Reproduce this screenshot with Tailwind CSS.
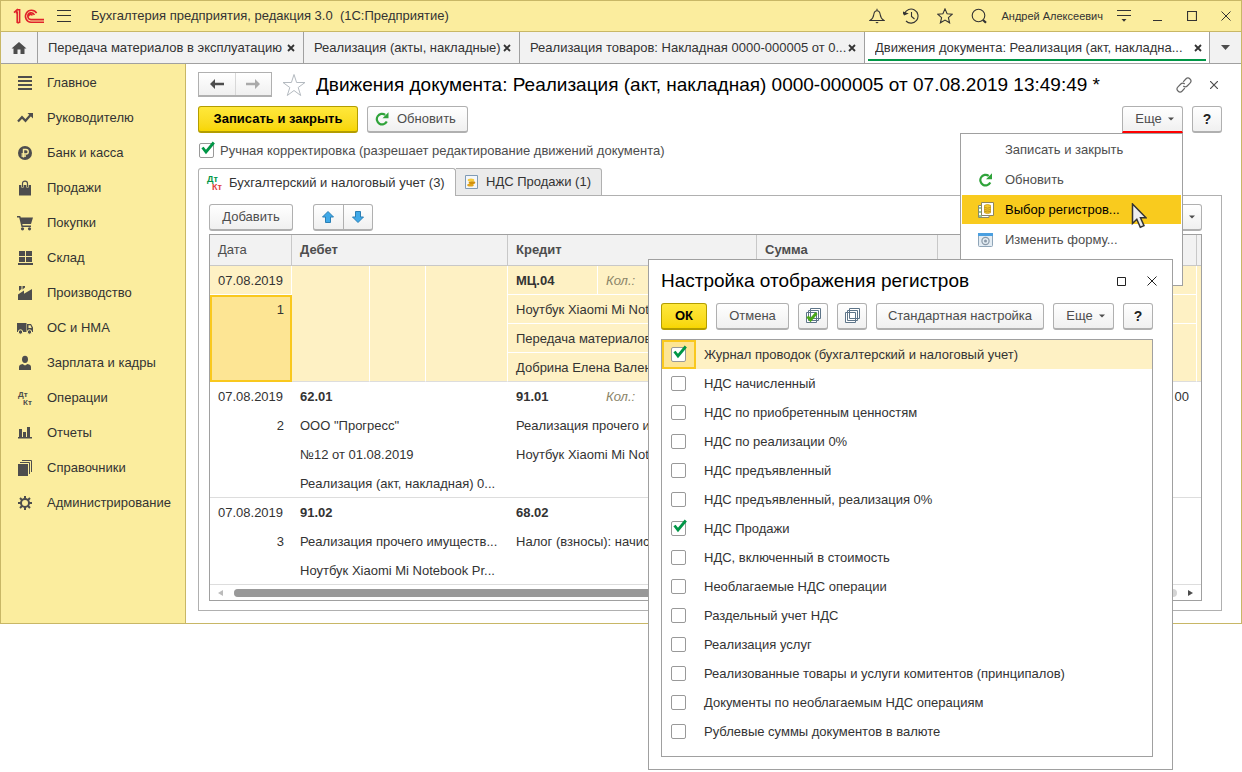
<!DOCTYPE html>
<html lang="ru">
<head>
    <meta charset="UTF-8">
    <meta name="viewport" content="width=device-width, initial-scale=1.0">
    <title>Бухгалтерия предприятия, редакция 3.0</title>
    <script src="https://cdn.jsdelivr.net/npm/@tailwindcss/browser@4"></script>
</head>
<body class="min-h-screen bg-white font-['Liberation_Sans',Arial,sans-serif] text-[13px] leading-4 text-[#333]">
    <!-- Shared icons -->
    <svg class="hidden">
        <symbol id="i-refresh" viewBox="0 0 14 14"><path d="M11.8 9.6A5.3 5.3 0 1 1 10.2 2.800" fill="none" stroke="#2fa33a" stroke-width="2.200"/><path d="M13.500 .3V6.300H7.500z" fill="#2fa33a"/></symbol>
        <symbol id="i-check" viewBox="0 0 16 14"><path d="M2.5 6.5 6 11 13.8 1.5" fill="none" stroke="#009646" stroke-width="2.8"/></symbol>
        <symbol id="i-x" viewBox="0 0 10 10"><path d="M.5.5l9 9M9.5.5l-9 9" fill="none" stroke="currentColor"/></symbol>
        <symbol id="i-xb" viewBox="0 0 8 8"><path d="M1 1l6 6M7 1 1 7" fill="none" stroke="currentColor" stroke-width="1.8"/></symbol>
        <symbol id="i-down" viewBox="0 0 6 4"><path d="M0 .5h6l-3 3z" fill="currentColor"/></symbol>
    </svg>

    <div class="relative">
        <div class="border border-[#c8b766]">
            <header class="flex h-[31px] items-center border-b border-[#c8b766] bg-[#fbed9e]">
                <svg class="ml-3 h-4 w-8 shrink-0" viewBox="0 0 32 16" fill="none" stroke="#e0232b" stroke-width="1.6"><path d="M1 4.6 3.8 2v3M2.8 4.6h1.4V15M3.6 1.700h3V15M4.200 14.600h2"/><path d="M23.600 5.200A6 6 0 1 0 18 14.300h13M21.400 7A3.400 3.400 0 1 0 18 11.600h13M15.500 8.400a2.200 2.200 0 0 1 4-1"/></svg>
                <button class="ml-[7px] flex h-6 w-6 items-center justify-center" aria-label="Меню"><svg class="h-3 w-3.5" viewBox="0 0 14 12" stroke="#333"><path d="M0 .5h14M0 5.5h14M0 11.5h14"/></svg></button>
                <h1 class="ml-[11px] flex-1 truncate pl-1 whitespace-pre">Бухгалтерия предприятия, редакция 3.0  (1С:Предприятие)</h1>
                <button class="flex w-[34px] justify-center" aria-label="Уведомления"><svg class="h-4 w-4" viewBox="0 0 16 16" fill="none" stroke="#333" stroke-width="1.1"><path d="M1 12.500h14C12.300 10.800 11.500 9 11.200 6.500 10.800 4 10 2.800 8 2.800S5.200 4 4.800 6.500C4.500 9 3.700 10.800 1 12.500zM8 2.800V.8"/><path d="M6.300 14h3.400L8 15.500z" fill="#333" stroke="none"/></svg></button>
                <button class="flex w-[34px] justify-center" aria-label="История"><svg class="h-4 w-4" viewBox="0 0 16 16" fill="none" stroke="#333" stroke-width="1.1"><path d="M1.500 5.500A7 7 0 1 1 3 13M8.500 4v4.500l3 2.500"/><path d="M0 4.200l1.300 2.600 2.900-1.300z" fill="#333"/></svg></button>
                <button class="flex w-[34px] justify-center" aria-label="Избранное"><svg class="h-4 w-4" viewBox="0 0 16 16" fill="none" stroke="#333" stroke-width="1.1"><path d="M8 .9l2.100 4.800 5.200.5-3.900 3.400 1.200 5.200L8 12.100l-4.600 2.700 1.200-5.200L.7 6.200l5.200-.5z"/></svg></button>
                <button class="flex w-[34px] justify-center" aria-label="Поиск"><svg class="h-4 w-4" viewBox="0 0 16 16" fill="none" stroke="#333" stroke-width="1.100"><circle cx="7.500" cy="7.500" r="6.300"/><path d="M12 12l3 2.800" stroke-width="2.200"/></svg></button>
                <span class="pr-1 pl-[5px] text-[11px]">Андрей Алексеевич</span>
                <button class="flex w-[34px] justify-center" aria-label="Настройки"><svg class="h-3.5 w-3.5" viewBox="0 0 14 14" stroke="#333"><path d="M0 1.500h14M0 6.500h14"/><path d="M4.500 10h5L7 12.800z" fill="#333" stroke="none"/></svg></button>
                <button class="flex w-[34px] justify-center" aria-label="Свернуть"><svg class="h-2.5 w-2.5" viewBox="0 0 10 10" stroke="#333"><path d="M0 9.500h9"/></svg></button>
                <button class="flex w-[34px] justify-center" aria-label="Развернуть"><svg class="h-2.5 w-2.5" viewBox="0 0 10 10" fill="none" stroke="#333"><path d="M.5.5h9v9h-9z" stroke-width="1.200"/></svg></button>
                <button class="flex w-8 justify-center pl-0.5" aria-label="Закрыть"><svg class="h-2.5 w-2.5"><use href="#i-x"/></svg></button>
            </header>

            <div class="flex h-8 border-b border-[#a0a0a0] bg-[#f2f2f2]">
                <button class="flex w-[37px] shrink-0 items-center justify-center border-r border-[#a0a0a0]" aria-label="Начальная страница"><svg class="h-3.5 w-4" viewBox="0 0 16 14" fill="#4d4d4d"><path d="M8 1 .5 7.500h2V13h4V8.500h3V13h4V7.500h2z"/></svg></button>
                <div class="flex w-[266px] items-center border-r border-[#a0a0a0] pl-2.5 pr-2"><a href="#" class="flex-1 truncate">Передача материалов в эксплуатацию</a><button aria-label="Закрыть вкладку"><svg class="h-2 w-2"><use href="#i-xb"/></svg></button></div>
                <div class="flex w-[216px] items-center border-r border-[#a0a0a0] pl-2.5 pr-2"><a href="#" class="flex-1 truncate">Реализация (акты, накладные)</a><button aria-label="Закрыть вкладку"><svg class="h-2 w-2"><use href="#i-xb"/></svg></button></div>
                <div class="flex w-[345px] items-center border-r border-[#a0a0a0] pl-2.5 pr-2"><a href="#" class="flex-1 truncate">Реализация товаров: Накладная 0000-000005 от 0...</a><button aria-label="Закрыть вкладку"><svg class="h-2 w-2"><use href="#i-xb"/></svg></button></div>
                <div class="flex flex-1 border-r border-[#a0a0a0] bg-white px-[3px] pb-0.5"><div class="flex flex-1 items-center border-b-2 border-[#009646] pt-1 pr-1 pl-[7px]"><a href="#" class="flex-1 truncate">Движения документа: Реализация (акт, накладна...</a><button aria-label="Закрыть вкладку"><svg class="h-2 w-2"><use href="#i-xb"/></svg></button></div></div>
                <button class="flex w-[31px] shrink-0 items-center justify-center text-[#4d4d4d]" aria-label="Список вкладок"><svg class="h-[5px] w-[9px]" viewBox="0 0 9 5"><path d="M0 0h9L4.500 5z" fill="currentColor"/></svg></button>
            </div>

            <div class="flex">
                <nav class="w-[185px] shrink-0 border-r border-[#c8b766] bg-[#fbed9e] pt-px">
                    <a href="#" class="flex h-[35px] items-center gap-3.5 pl-4"><svg class="h-4 w-4" viewBox="0 0 16 16" fill="#4d4d4d"><path d="M1 1h14v2H1zM1 5h14v2H1zM1 9h14v2H1zM1 13h14v2H1z"/></svg>Главное</a>
                    <a href="#" class="flex h-[35px] items-center gap-3.5 pl-4"><svg class="h-4 w-4" viewBox="0 0 16 16"><path d="M1 11.500 5 7.200l3.500 3.600L13.500 5" fill="none" stroke="#4d4d4d" stroke-width="2.200"/><path d="M10.500 3H16v5.500z" fill="#4d4d4d"/></svg>Руководителю</a>
                    <a href="#" class="flex h-[35px] items-center gap-3.5 pl-4"><svg class="h-4 w-4" viewBox="0 0 16 16"><circle cx="8" cy="8" r="7" fill="#4d4d4d"/><path d="M6.500 12.500v-8H9a2.200 2.200 0 0 1 0 4.500H4.500M4.500 11H9" fill="none" stroke="#fbed9e" stroke-width="1.400"/></svg>Банк и касса</a>
                    <a href="#" class="flex h-[35px] items-center gap-3.5 pl-4"><svg class="h-4 w-4" viewBox="0 0 16 16"><path d="M2 5h12v10.500H2z" fill="#4d4d4d"/><path d="M5.500 7.500V3.500Q5.500 1 8 1t2.500 2.500v4" fill="none" stroke="#fbed9e" stroke-width="2.400"/><path d="M5.500 7V3.500Q5.500 1.200 8 1.200t2.500 2.300V7" fill="none" stroke="#4d4d4d" stroke-width="1.200"/></svg>Продажи</a>
                    <a href="#" class="flex h-[35px] items-center gap-3.5 pl-4"><svg class="h-4 w-4" viewBox="0 0 16 16" fill="#4d4d4d"><path d="M0 1h3.200l.6 1.500H16L14 9H5.300l.4 1.500H14V12H4.500L2.200 2.500H0z"/><circle cx="5.500" cy="13.800" r="1.600"/><circle cx="12.500" cy="13.800" r="1.600"/></svg>Покупки</a>
                    <a href="#" class="flex h-[35px] items-center gap-3.5 pl-4"><svg class="h-4 w-4" viewBox="0 0 16 16" fill="#4d4d4d"><path d="M2 1h6v5H2zM9 1h6v5H9zM2 7h6v5H2zM9 7h6v5H9zM1 13h15v2H1z"/></svg>Склад</a>
                    <a href="#" class="flex h-[35px] items-center gap-3.5 pl-4"><svg class="h-4 w-4" viewBox="0 0 16 16" fill="#4d4d4d"><path d="M1 15V9.500L7 5.500v3.300L15 4v11zM2 1h2.500v3L2 6zM5.500 1H8v1.500l-2.500 2z"/></svg>Производство</a>
                    <a href="#" class="flex h-[35px] items-center gap-3.5 pl-4"><svg class="h-4 w-4" viewBox="0 0 16 16" fill="#4d4d4d"><path d="M0 3h9.500v9H0zM10 4h4l2 3.500V12h-6z"/><path d="M11.500 5.300h2L14.700 8h-3.200z" fill="#fbed9e"/><circle cx="3.500" cy="12" r="2.200" stroke="#fbed9e" stroke-width="1"/><circle cx="12.500" cy="12" r="2.200" stroke="#fbed9e" stroke-width="1"/></svg>ОС и НМА</a>
                    <a href="#" class="flex h-[35px] items-center gap-3.5 pl-4"><svg class="h-4 w-4" viewBox="0 0 16 16" fill="#4d4d4d"><ellipse cx="8" cy="4.300" rx="3" ry="3.600"/><path d="M2 15v-3q0-2.500 3.500-3L8 10.500 10.500 9q3.500.5 3.500 3v3z"/></svg>Зарплата и кадры</a>
                    <a href="#" class="flex h-[35px] items-center gap-3.5 pl-4"><svg class="h-4 w-4 overflow-visible" viewBox="0 0 16 16" fill="#4d4d4d" font-size="8" font-weight="bold"><text x="1" y="7">Дт</text><text x="6" y="15">Кт</text></svg>Операции</a>
                    <a href="#" class="flex h-[35px] items-center gap-3.5 pl-4"><svg class="h-4 w-4" viewBox="0 0 16 16" fill="#4d4d4d"><path d="M2 4h3v8H2zM6 7h3v5H6zM10 2h3v10h-3zM1 12h14v1.500H1z"/></svg>Отчеты</a>
                    <a href="#" class="flex h-[35px] items-center gap-3.5 pl-4"><svg class="h-4 w-4" viewBox="0 0 16 16" fill="#4d4d4d"><path d="M1 4h10v12H1z"/><path d="M3 2.500h9.500V14M5 .5h9.500V12" fill="none" stroke="#4d4d4d"/></svg>Справочники</a>
                    <a href="#" class="flex h-[35px] items-center gap-3.5 pl-4"><svg class="h-4 w-4" viewBox="0 0 16 16" fill="none" stroke="#4d4d4d"><circle cx="8" cy="8" r="4" stroke-width="2"/><path d="M8 1v3M8 12v3M1 8h3M12 8h3M3 3l2.200 2.200M10.800 10.800 13 13M13 3l-2.200 2.200M5.200 10.800 3 13" stroke-width="2"/></svg>Администрирование</a>
                </nav>

                <main class="min-w-0 flex-1 pt-2 pr-[19px] pb-3 pl-3">
                    <div class="flex h-[25px] items-center">
                        <div class="flex h-[25px] w-[74px] shrink-0 border border-b-2 border-[#b0b0b0] bg-linear-to-b from-white to-[#f0f0f0]">
                            <button class="flex flex-1 items-center justify-center border-r border-[#d8d8d8]" aria-label="Назад"><svg class="h-3 w-3.5" viewBox="0 0 14 12"><path d="M0 6l5-5v3.700h9v2.600H5V11z" fill="#4d4d4d"/></svg></button>
                            <button class="flex flex-1 items-center justify-center" aria-label="Вперед"><svg class="h-3 w-3.5" viewBox="0 0 14 12"><path d="M14 6 9 1v3.700H0v2.600h9V11z" fill="#aaa"/></svg></button>
                        </div>
                        <button class="ml-2.5 shrink-0" aria-label="В избранное"><svg class="h-6 w-6" viewBox="0 0 24 24" fill="none" stroke="#b4bac0"><path d="M12 1.500l2.600 8h8.400l-6.800 5 2.500 8L12 17.500l-6.700 5 2.500-8L1 9.500h8.400z"/></svg></button>
                        <h2 class="ml-2.5 flex-1 truncate text-[19px] leading-6 text-black">Движения документа: Реализация (акт, накладная) 0000-000005 от 07.08.2019 13:49:49 *</h2>
                        <button aria-label="Получить ссылку"><svg class="h-4 w-4" viewBox="0 0 16 16" fill="none" stroke="#666" stroke-width="1.200"><path d="M7.200 4.800 9.800 2a2.900 2.900 0 0 1 4.200 4.200L11.200 9A2.700 2.700 0 0 1 7.300 9M8.800 11.200 6.200 14A2.900 2.900 0 0 1 2 9.800L4.800 7A2.700 2.700 0 0 1 8.700 7"/></svg></button>
                        <button class="mx-[18px] mr-1 text-[#4d4d4d]" aria-label="Закрыть форму"><svg class="h-2 w-2" viewBox="0 0 8 8"><path d="M0 0l8 8M8 0 0 8" stroke="currentColor" stroke-width="1.200"/></svg></button>
                    </div>

                    <div class="mt-[9px] flex items-center">
                        <button class="h-[27px] w-40 rounded-[3px] border border-b-2 border-[#b39d00] bg-linear-to-b from-[#ffe83a] to-[#f7d600] font-bold text-black">Записать и закрыть</button>
                        <button class="ml-[9px] flex h-[27px] w-[101px] items-center gap-2 rounded-[3px] border border-b-2 border-[#b0b0b0] bg-linear-to-b from-white to-[#f0f0f0] pl-[7px] text-[#4d4d4d]"><svg class="h-3.5 w-3.5"><use href="#i-refresh"/></svg>Обновить</button>
                        <div class="relative ml-auto">
                            <button class="flex h-[27px] w-[61px] items-center justify-center gap-1.5 rounded-t-[3px] border border-b-2 border-[#b0b0b0] border-b-[red] bg-linear-to-b from-white to-[#f0f0f0] pl-1 text-[#4d4d4d]">Еще<svg class="h-1 w-1.5"><use href="#i-down"/></svg></button>
                            <!-- Actions menu -->
                            <div class="absolute top-full right-0 z-10 w-[223px] border border-[#a0a0a0] bg-white px-px pt-px pb-[30px] text-[#4d4d4d]">
                                <button class="flex h-[30px] w-full items-center pl-[43px]">Записать и закрыть</button>
                                <button class="flex h-[30px] w-full items-center gap-3 pl-4"><svg class="h-3.5 w-[15px]"><use href="#i-refresh"/></svg>Обновить</button>
                                <button class="relative mb-px flex h-[29px] w-full items-center gap-2.5 bg-[#f9cb1e] pl-4 text-black"><svg class="h-4 w-[17px]" viewBox="0 0 17 16"><path d="M.5 3.500H11v12H.5z" fill="#fff" stroke="#8a8a6a"/><path d="M1 5h3v2H1zM1 9h3v2H1zM1 13h3v2H1z" fill="#8fc9a0"/><path d="M3.500.5h12v13h-12z" fill="#fff" stroke="#8c8560"/><path d="M6.500 3.300q3-1.600 6 0v7.500q-3 1.600-6 0z" fill="#f4c82c" stroke="#c79a15" stroke-width=".8"/><path d="M6.500 5.500q3 1.300 6 0M6.500 7.500q3 1.300 6 0M6.500 9.300q3 1.300 6 0" fill="none" stroke="#b88a10" stroke-width=".8"/></svg>Выбор регистров...
                                    <svg class="absolute top-2 left-[169px] h-[27px] w-4" viewBox="0 0 16 27"><path d="M1.500 1v19.500l4.300-4.200 3.500 8 3.700-1.700-3.500-7.800h5.500z" fill="#eee" stroke="#333" stroke-width="1.500"/></svg>
                                </button>
                                <button class="flex h-[30px] w-full items-center gap-3 pl-4"><svg class="h-3.5 w-[15px]" viewBox="0 0 15 14"><rect x=".5" y=".5" width="14" height="13" rx="1" fill="#e3ecf3" stroke="#8fa5b8"/><path d="M0 0h15v3H0z" fill="#4a9fe0"/><circle cx="7.500" cy="8" r="3.600" fill="none" stroke="#8a99a8" stroke-width="1.200"/><circle cx="7.500" cy="8" r="1.500" fill="#8a99a8"/></svg>Изменить форму...</button>
                            </div>
                        </div>
                        <button class="ml-[9px] h-[27px] w-[30px] rounded-[3px] border border-b-2 border-[#b0b0b0] bg-linear-to-b from-white to-[#f0f0f0] text-[14px] font-bold text-[#222]">?</button>
                    </div>

                    <label class="flex h-[35px] items-center gap-1.5 pl-px text-[#4d4d4d]">
                        <span class="relative flex"><input type="checkbox" checked class="peer h-[15px] w-[15px] appearance-none rounded-[2px] border border-[#999] bg-white"><svg class="pointer-events-none absolute -top-0.5 left-px hidden h-3.5 w-4 peer-checked:block"><use href="#i-check"/></svg></span>
                        Ручная корректировка (разрешает редактирование движений документа)
                    </label>

                    <div class="relative z-1 -mb-px flex h-7">
                        <button class="flex w-[258px] items-center gap-1.5 rounded-t-[3px] border border-b-0 border-[#b0b0b0] bg-white pl-2"><svg class="h-4 w-4 overflow-visible" viewBox="0 0 16 16" font-size="9" font-weight="bold"><text x="0" y="7" fill="#009646">Дт</text><text x="5" y="15" fill="#e0413f">Кт</text></svg>Бухгалтерский и налоговый учет (3)</button>
                        <button class="flex w-[146px] items-center gap-2 rounded-tr-[3px] border border-l-0 border-[#b0b0b0] bg-[#ebebeb] pl-[9px]"><svg class="h-3.5 w-[13px]" viewBox="0 0 13 14"><path d="M.5.5h12v13H.5z" fill="#f3f6fa" stroke="#7f9bb5"/><ellipse cx="5.500" cy="10" rx="3.300" ry="1.600" fill="#e0a41c"/><ellipse cx="7" cy="7.500" rx="3.300" ry="1.600" fill="#d0900f"/><ellipse cx="6" cy="5" rx="3.300" ry="1.600" fill="#f6ca3c"/></svg>НДС Продажи (1)</button>
                    </div>

                    <section class="border border-[#b0b0b0] pt-2 pr-[19px] pb-[9px] pl-2.5">
                        <div class="mb-[3px] flex">
                            <button class="h-[27px] w-[84px] rounded-[3px] border border-b-2 border-[#b0b0b0] bg-linear-to-b from-white to-[#f0f0f0] text-[#4d4d4d]">Добавить</button>
                            <div class="ml-5 flex h-[27px] w-[60px] rounded-[3px] border border-b-2 border-[#b0b0b0] bg-linear-to-b from-white to-[#f0f0f0]">
                                <button class="flex flex-1 items-center justify-center border-r border-[#b0b0b0]" aria-label="Вверх"><svg class="h-3 w-3" viewBox="0 0 12 12"><path d="M6 .5 11.500 6H8.500v5.500h-5V6H.5z" fill="#3fa9e8" stroke="#2a7fb5"/></svg></button>
                                <button class="flex flex-1 items-center justify-center" aria-label="Вниз"><svg class="h-3 w-3" viewBox="0 0 12 12"><path d="M6 11.500.5 6h3V.5h5V6h3z" fill="#3fa9e8" stroke="#2a7fb5"/></svg></button>
                            </div>
                            <button class="ml-auto flex h-[27px] w-[61px] items-center justify-end rounded-[3px] border border-b-2 border-[#b0b0b0] bg-linear-to-b from-white to-[#f0f0f0] pr-1.5 text-[#4d4d4d]" aria-label="Еще"><svg class="h-1 w-1.5"><use href="#i-down"/></svg></button>
                        </div>

                        <div class="border border-[#a0a0a0]">
                            <table class="w-full table-fixed border-separate border-spacing-0 whitespace-nowrap">
                                <colgroup><col class="w-[82px]"><col class="w-[78px]"><col class="w-[56px]"><col class="w-[82px]"><col class="w-[90px]"><col class="w-[159px]"><col class="w-[181px]"><col><col class="w-1"></colgroup>
                                <thead class="bg-[#f2f2f2] text-left text-[#4d4d4d]">
                                    <tr class="h-[31px]">
                                        <th class="border-r border-b border-[#c8c8c8] pl-2 font-normal">Дата</th>
                                        <th colspan="3" class="border-r border-b border-[#c8c8c8] pl-2">Дебет</th>
                                        <th colspan="2" class="border-r border-b border-[#c8c8c8] pl-2">Кредит</th>
                                        <th class="border-r border-b border-[#c8c8c8] pl-2">Сумма</th>
                                        <th class="border-r border-b border-[#c8c8c8]"></th>
                                        <th class="border-b border-[#c8c8c8]"></th>
                                    </tr>
                                </thead>
                                <tbody class="bg-[#fef1c4]">
                                    <tr class="h-[29px]">
                                        <td class="border-r border-b border-white pt-px pl-2">07.08.2019</td>
                                        <td rowspan="4" class="border-r border-b border-white border-b-[#ddd]"></td>
                                        <td rowspan="4" class="border-r border-b border-white border-b-[#ddd]"></td>
                                        <td rowspan="4" class="border-r border-b border-white border-b-[#ddd]"></td>
                                        <td class="border-r border-b border-white pt-px pl-2 font-bold">МЦ.04</td>
                                        <td class="border-r border-b border-white pt-px pl-2 text-[#8a8468] italic">Кол.:</td>
                                        <td class="border-r border-b border-white"></td>
                                        <td class="border-r border-b border-white"></td>
                                        <td rowspan="4" class="border-b border-[#ddd]"></td>
                                    </tr>
                                    <tr class="h-[29px]">
                                        <td rowspan="3" class="border-2 border-[#f9c81e] bg-[#fde594] pt-[5px] pr-1.5 text-right align-top">1</td>
                                        <td colspan="2" class="border-r border-b border-white pt-px pl-2">Ноутбук Xiaomi Mi Not</td>
                                        <td class="border-r border-b border-white"></td>
                                        <td class="border-r border-b border-white"></td>
                                    </tr>
                                    <tr class="h-[29px]">
                                        <td colspan="2" class="border-r border-b border-white pt-px pl-2">Передача материалов</td>
                                        <td rowspan="2" class="border-r border-b border-white border-b-[#ddd]"></td>
                                        <td rowspan="2" class="border-r border-b border-white border-b-[#ddd]"></td>
                                    </tr>
                                    <tr class="h-[29px]">
                                        <td colspan="2" class="border-r border-b border-white border-b-[#ddd] pt-px pl-2">Добрина Елена Вален</td>
                                    </tr>
                                </tbody>
                                <tbody>
                                    <tr class="h-[29px]">
                                        <td class="pl-2">07.08.2019</td>
                                        <td colspan="3" class="pl-2 font-bold">62.01</td>
                                        <td class="pl-2 font-bold">91.01</td>
                                        <td class="pl-2 text-[#8a8468] italic">Кол.:</td>
                                        <td></td>
                                        <td class="pr-2 text-right">00</td>
                                        <td></td>
                                    </tr>
                                    <tr class="h-[29px]">
                                        <td class="pr-2 text-right">2</td>
                                        <td colspan="3" class="pl-2">ООО "Прогресс"</td>
                                        <td colspan="2" class="pl-2">Реализация прочего и</td>
                                        <td colspan="3"></td>
                                    </tr>
                                    <tr class="h-[29px]">
                                        <td></td>
                                        <td colspan="3" class="pl-2">№12 от 01.08.2019</td>
                                        <td colspan="2" class="pl-2">Ноутбук Xiaomi Mi Not</td>
                                        <td colspan="3"></td>
                                    </tr>
                                    <tr class="h-[29px]">
                                        <td class="border-b border-[#ddd]"></td>
                                        <td colspan="3" class="border-b border-[#ddd] pt-px pl-2">Реализация (акт, накладная) 0...</td>
                                        <td colspan="5" class="border-b border-[#ddd]"></td>
                                    </tr>
                                </tbody>
                                <tbody>
                                    <tr class="h-[29px]">
                                        <td class="pl-2">07.08.2019</td>
                                        <td colspan="3" class="pl-2 font-bold">91.02</td>
                                        <td colspan="2" class="pl-2 font-bold">68.02</td>
                                        <td colspan="3"></td>
                                    </tr>
                                    <tr class="h-[29px]">
                                        <td class="pr-2 text-right">3</td>
                                        <td colspan="3" class="pl-2">Реализация прочего имуществ...</td>
                                        <td colspan="2" class="pl-2">Налог (взносы): начис</td>
                                        <td colspan="3"></td>
                                    </tr>
                                    <tr class="h-[29px]">
                                        <td class="border-b border-[#ddd]"></td>
                                        <td colspan="3" class="border-b border-[#ddd] pt-px pl-2">Ноутбук Xiaomi Mi Notebook Pr...</td>
                                        <td colspan="5" class="border-b border-[#ddd]"></td>
                                    </tr>
                                </tbody>
                            </table>
                            <div class="flex h-[15px] items-center gap-[11px] px-2">
                                <svg class="h-1.5 w-[5px]" viewBox="0 0 5 6"><path d="M5 0v6L0 3z" fill="#bbb"/></svg>
                                <div class="h-2 flex-1 rounded-full bg-[#d4d4d4]"><div class="h-2 w-4/5 rounded-full bg-[#999]"></div></div>
                                <svg class="h-1.5 w-[5px]" viewBox="0 0 5 6"><path d="M0 0v6l5-3z" fill="#4d4d4d"/></svg>
                            </div>
                        </div>
                    </section>
                </main>
            </div>
        </div>

        <!-- Register display settings -->
        <div role="dialog" aria-labelledby="dialog-title" class="absolute top-[259px] right-[69px] z-20 w-[525px] border border-[#a0a0a0] bg-white pt-[9px] pr-[19px] pb-3 pl-3">
            <div class="flex h-6 items-center">
                <h2 id="dialog-title" class="flex-1 text-[19px] leading-6 text-black">Настройка отображения регистров</h2>
                <button class="mr-[21px]" aria-label="Развернуть"><svg class="h-[9px] w-[9px]" viewBox="0 0 9 9" fill="none" stroke="#222"><path d="M.5.5h8v8h-8z"/></svg></button>
                <button class="-mr-1" aria-label="Закрыть"><svg class="h-2.5 w-2.5 text-[#222]"><use href="#i-x"/></svg></button>
            </div>
            <div class="mt-2.5 flex gap-[9px] text-[#4d4d4d]">
                <button class="h-[27px] w-[46px] rounded-[3px] border border-b-2 border-[#b39d00] bg-linear-to-b from-[#ffe83a] to-[#f7d600] font-bold text-black">ОК</button>
                <button class="h-[27px] w-[73px] rounded-[3px] border border-b-2 border-[#b0b0b0] bg-linear-to-b from-white to-[#f0f0f0]">Отмена</button>
                <button class="flex h-[27px] w-[30px] items-center justify-center rounded-[3px] border border-b-2 border-[#b0b0b0] bg-linear-to-b from-white to-[#f0f0f0]" aria-label="Установить флажки"><svg class="h-4 w-4" viewBox="0 0 16 16" fill="#fff" stroke="#5d7488"><path d="M5.500.5h10v10h-10zM3.500 2.500h10v10h-10zM1.500 4.500h10v10h-10z"/><path d="M2.500 8.500l3 3.500 6-7" fill="none" stroke="#4aa818" stroke-width="2.800"/></svg></button>
                <button class="flex h-[27px] w-[30px] items-center justify-center rounded-[3px] border border-b-2 border-[#b0b0b0] bg-linear-to-b from-white to-[#f0f0f0]" aria-label="Снять флажки"><svg class="h-4 w-4" viewBox="0 0 16 16" fill="#fff" stroke="#5d7488"><path d="M5.500.5h10v10h-10zM3.500 2.500h10v10h-10zM1.500 4.500h10v10h-10z"/></svg></button>
                <button class="h-[27px] flex-1 rounded-[3px] border border-b-2 border-[#b0b0b0] bg-linear-to-b from-white to-[#f0f0f0] whitespace-nowrap">Стандартная настройка</button>
                <button class="flex h-[27px] w-[61px] items-center justify-center gap-1.5 rounded-[3px] border border-b-2 border-[#b0b0b0] bg-linear-to-b from-white to-[#f0f0f0] pl-1">Еще<svg class="h-1 w-1.5"><use href="#i-down"/></svg></button>
                <button class="h-[27px] w-[30px] rounded-[3px] border border-b-2 border-[#b0b0b0] bg-linear-to-b from-white to-[#f0f0f0] text-[14px] font-bold text-[#222]">?</button>
            </div>
            <div class="mt-[9px] border border-[#a0a0a0] pb-2.5">
                <label class="flex h-[29px] items-center gap-2 bg-[#fef1c4]"><span class="flex h-[29px] w-[34px] items-center border-2 border-[#f9c81e] bg-[#fde594] pl-[7px]"><span class="relative flex"><input type="checkbox" checked class="peer h-[15px] w-[15px] appearance-none rounded-[2px] border border-[#999] bg-white"><svg class="pointer-events-none absolute -top-0.5 left-px hidden h-3.5 w-4 peer-checked:block"><use href="#i-check"/></svg></span></span>Журнал проводок (бухгалтерский и налоговый учет)</label>
                <label class="flex h-[29px] items-center gap-[18px] pl-[9px]"><input type="checkbox" class="h-[15px] w-[15px] appearance-none rounded-[2px] border border-[#999] bg-white">НДС начисленный</label>
                <label class="flex h-[29px] items-center gap-[18px] pl-[9px]"><input type="checkbox" class="h-[15px] w-[15px] appearance-none rounded-[2px] border border-[#999] bg-white">НДС по приобретенным ценностям</label>
                <label class="flex h-[29px] items-center gap-[18px] pl-[9px]"><input type="checkbox" class="h-[15px] w-[15px] appearance-none rounded-[2px] border border-[#999] bg-white">НДС по реализации 0%</label>
                <label class="flex h-[29px] items-center gap-[18px] pl-[9px]"><input type="checkbox" class="h-[15px] w-[15px] appearance-none rounded-[2px] border border-[#999] bg-white">НДС предъявленный</label>
                <label class="flex h-[29px] items-center gap-[18px] pl-[9px]"><input type="checkbox" class="h-[15px] w-[15px] appearance-none rounded-[2px] border border-[#999] bg-white">НДС предъявленный, реализация 0%</label>
                <label class="flex h-[29px] items-center gap-[18px] pl-[9px]"><span class="relative flex"><input type="checkbox" checked class="peer h-[15px] w-[15px] appearance-none rounded-[2px] border border-[#999] bg-white"><svg class="pointer-events-none absolute -top-0.5 left-px hidden h-3.5 w-4 peer-checked:block"><use href="#i-check"/></svg></span>НДС Продажи</label>
                <label class="flex h-[29px] items-center gap-[18px] pl-[9px]"><input type="checkbox" class="h-[15px] w-[15px] appearance-none rounded-[2px] border border-[#999] bg-white">НДС, включенный в стоимость</label>
                <label class="flex h-[29px] items-center gap-[18px] pl-[9px]"><input type="checkbox" class="h-[15px] w-[15px] appearance-none rounded-[2px] border border-[#999] bg-white">Необлагаемые НДС операции</label>
                <label class="flex h-[29px] items-center gap-[18px] pl-[9px]"><input type="checkbox" class="h-[15px] w-[15px] appearance-none rounded-[2px] border border-[#999] bg-white">Раздельный учет НДС</label>
                <label class="flex h-[29px] items-center gap-[18px] pl-[9px]"><input type="checkbox" class="h-[15px] w-[15px] appearance-none rounded-[2px] border border-[#999] bg-white">Реализация услуг</label>
                <label class="flex h-[29px] items-center gap-[18px] pl-[9px]"><input type="checkbox" class="h-[15px] w-[15px] appearance-none rounded-[2px] border border-[#999] bg-white">Реализованные товары и услуги комитентов (принципалов)</label>
                <label class="flex h-[29px] items-center gap-[18px] pl-[9px]"><input type="checkbox" class="h-[15px] w-[15px] appearance-none rounded-[2px] border border-[#999] bg-white">Документы по необлагаемым НДС операциям</label>
                <label class="flex h-[29px] items-center gap-[18px] pl-[9px]"><input type="checkbox" class="h-[15px] w-[15px] appearance-none rounded-[2px] border border-[#999] bg-white">Рублевые суммы документов в валюте</label>
            </div>
        </div>
    </div>
</body>
</html>
